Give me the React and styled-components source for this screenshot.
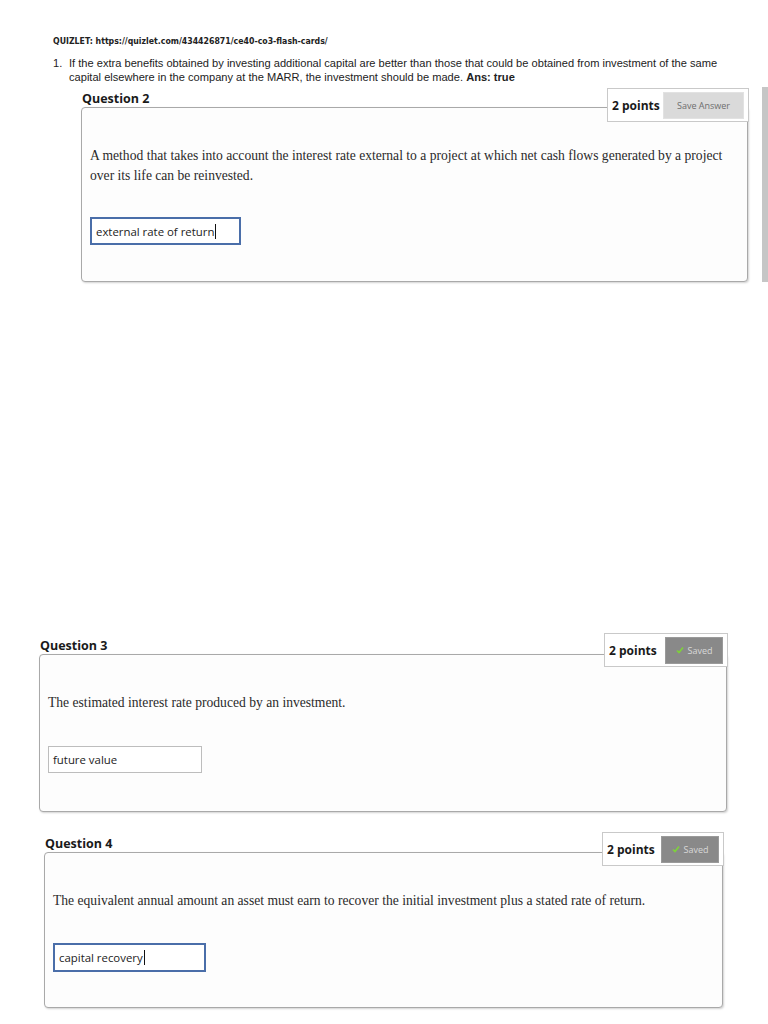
import React from 'react';
import styled, { createGlobalStyle } from 'styled-components';

const GlobalStyle = createGlobalStyle`
  body {
    margin: 0;
    background: #ffffff;
    font-family: "Liberation Sans", Arial, sans-serif;
  }
`;

const Page = styled.div`
  width: 768px;
  height: 1024px;
  overflow: hidden;
  padding-top: 35px;
  box-sizing: border-box;
`;

const Source = styled.div`
  margin-left: 53px;
  font-family: "DejaVu Sans Condensed", "DejaVu Sans", sans-serif;
  font-stretch: condensed;
  font-weight: 700;
  font-size: 8.7px;
  line-height: 12px;
  color: #222;
`;

const Item = styled.div`
  display: flex;
  margin: 9px 0 0 53px;
  width: 682px;
  font-size: 11.1px;
  line-height: 14px;
  color: #222;
`;

const ItemNo = styled.span`
  width: 16px;
  flex-shrink: 0;
`;

const Row = styled.div`
  display: flex;
  align-items: flex-end;
  margin: ${(p) => p.$top}px 0 0 ${(p) => p.$left}px;
`;

const Block = styled.div`
  width: ${(p) => p.$width}px;
  margin: ${(p) => p.$top || 0}px 0 0 ${(p) => p.$left || 0}px;
`;

const Title = styled.div`
  font-family: "Open Sans", sans-serif;
  font-weight: 700;
  font-size: 12.5px;
  line-height: 16px;
  color: #1a1a1a;
  padding-left: 1px;
`;

const Card = styled.div`
  position: relative;
  height: ${(p) => p.$height}px;
  box-sizing: border-box;
  border: 1px solid #a9a9a9;
  border-radius: 4px;
  background: #fdfdfd;
  box-shadow: 1px 1px 2px rgba(0, 0, 0, 0.18);
  padding: ${(p) => p.$padTop}px 14px 0 ${(p) => p.$padLeft}px;
`;

const Points = styled.div`
  position: absolute;
  top: ${(p) => p.$top}px;
  right: -2px;
  width: ${(p) => p.$width}px;
  height: 34px;
  box-sizing: border-box;
  display: flex;
  align-items: center;
  justify-content: space-between;
  padding: 0 4px 0 4px;
  background: #ffffff;
  border: 1px solid #c9c9c9;
`;

const PointsLabel = styled.span`
  font-family: "Open Sans", sans-serif;
  font-weight: 700;
  font-size: 12px;
  color: #1a1a1a;
`;

const ActionButton = styled.div`
  display: flex;
  align-items: center;
  justify-content: center;
  gap: 4px;
  width: ${(p) => p.$width}px;
  height: 25px;
  font-family: "Open Sans", sans-serif;
  font-size: 9px;
  background: ${(p) => (p.$saved ? '#898989' : '#dadada')};
  color: ${(p) => (p.$saved ? '#d8d8d8' : '#6e6e6e')};
  border: 1px solid ${(p) => (p.$saved ? '#9a9a9a' : '#e2e2e2')};
`;

const Prompt = styled.p`
  margin: 0;
  font-family: "Liberation Serif", "Times New Roman", serif;
  font-size: 13.6px;
  line-height: 20px;
  color: #2a2a2a;
`;

const Field = styled.div`
  width: ${(p) => p.$width}px;
  height: ${(p) => p.$height}px;
  margin-top: ${(p) => p.$gap}px;
  box-sizing: border-box;
  display: flex;
  align-items: center;
  padding-left: 4px;
  font-family: "Open Sans", sans-serif;
  font-size: 11.4px;
  color: #222;
  background: #fff;
  border: ${(p) => (p.$focus ? '2px solid #4a6ea9' : '1px solid #bdbdbd')};
`;

const Caret = styled.span`
  display: inline-block;
  width: 1px;
  height: 15px;
  background: #111;
  margin-left: 1px;
`;

const Scrollbar = styled.div`
  width: 6px;
  height: 195px;
  margin-left: 14px;
  background: #c6c6c6;
`;

const Check = () => (
  <svg width="8" height="8" viewBox="0 0 8 8">
    <polyline points="1,4.5 3,6.5 7,1.5" fill="none" stroke="#7ed23a" strokeWidth="1.6" />
  </svg>
);

const Question = ({ q, left, top }) => (
  <Block $width={q.width} $left={left} $top={top}>
    <Title>{q.title}</Title>
    <Card $height={q.height} $padTop={q.padTop} $padLeft={q.padLeft}>
      <Points $top={q.pointsTop} $width={q.pointsWidth}>
        <PointsLabel>2 points</PointsLabel>
        <ActionButton $saved={q.saved} $width={q.saved ? 56 : 79}>
          {q.saved && <Check />}
          {q.saved ? 'Saved' : 'Save Answer'}
        </ActionButton>
      </Points>
      <Prompt>{q.text}</Prompt>
      <Field $width={q.fieldWidth} $height={q.fieldHeight} $gap={q.fieldGap} $focus={q.focus}>
        {q.answer}
        {q.focus && <Caret />}
      </Field>
    </Card>
  </Block>
);

const questions = [
  {
    title: 'Question 2',
    width: 667,
    height: 175,
    padTop: 38,
    padLeft: 8,
    pointsTop: -20,
    pointsWidth: 142,
    saved: false,
    text: 'A method that takes into account the interest rate external to a project at which net cash flows generated by a project over its life can be reinvested.',
    answer: 'external rate of return',
    fieldWidth: 151,
    fieldHeight: 28,
    fieldGap: 31,
    focus: true,
  },
  {
    title: 'Question 3',
    width: 688,
    height: 158,
    padTop: 38,
    padLeft: 8,
    pointsTop: -22,
    pointsWidth: 124,
    saved: true,
    text: 'The estimated interest rate produced by an investment.',
    answer: 'future value',
    fieldWidth: 154,
    fieldHeight: 27,
    fieldGap: 33,
    focus: false,
  },
  {
    title: 'Question 4',
    width: 679,
    height: 156,
    padTop: 38,
    padLeft: 8,
    pointsTop: -21,
    pointsWidth: 122,
    saved: true,
    text: 'The equivalent annual amount an asset must earn to recover the initial investment plus a stated rate of return.',
    answer: 'capital recovery',
    fieldWidth: 153,
    fieldHeight: 29,
    fieldGap: 32,
    focus: true,
  },
];

export default function App() {
  return (
    <Page>
      <GlobalStyle />
      <Source>QUIZLET: https://quizlet.com/434426871/ce40-co3-flash-cards/</Source>
      <Item>
        <ItemNo>1.</ItemNo>
        <span>
          If the extra benefits obtained by investing additional capital are better than those that could be obtained from investment of the same capital elsewhere in the company at the MARR, the investment should be made. <b>Ans: true</b>
        </span>
      </Item>
      <Row $top={3} $left={81}>
        <Question q={questions[0]} />
        <Scrollbar />
      </Row>
      <Question q={questions[1]} left={39} top={356} />
      <Question q={questions[2]} left={44} top={24} />
    </Page>
  );
}
